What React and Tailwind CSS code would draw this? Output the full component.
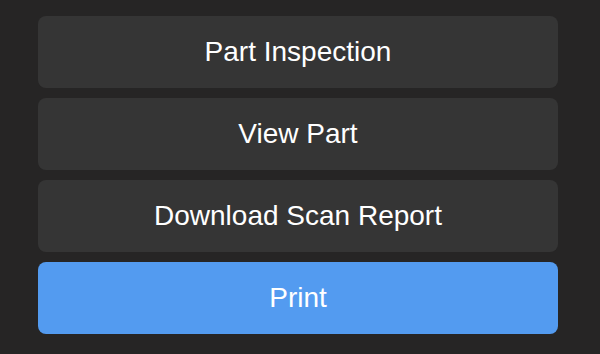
const items = ['Part Inspection', 'View Part', 'Download Scan Report'];

export default function App() {
  return (
    <div className="w-[600px] h-[354px] bg-[#262525] pt-4 pl-[38px] pr-[42px] flex flex-col gap-[10px]" style={{ fontFamily: '"Liberation Sans", Arial, sans-serif' }}>
      {items.map((label) => (
        <button
          key={label}
          className="h-[72px] w-full rounded-lg bg-[#353535] text-white text-[28px] flex items-center justify-center"
        >
          {label}
        </button>
      ))}
      <button className="h-[72px] w-full rounded-lg bg-[#539bf0] text-white text-[28px] flex items-center justify-center">
        Print
      </button>
    </div>
  );
}
